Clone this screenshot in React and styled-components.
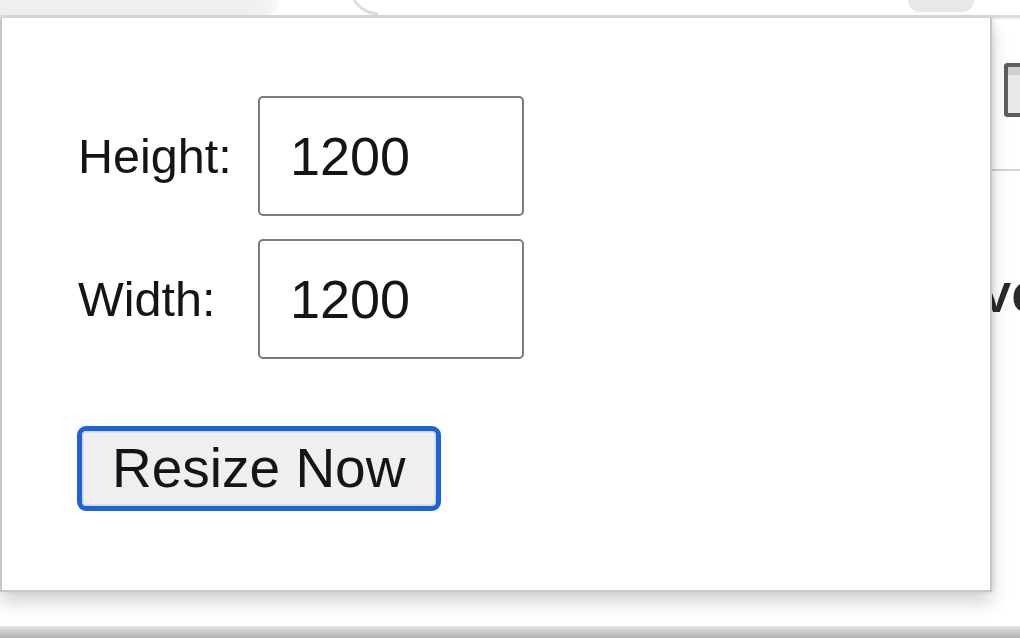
import React from "react";
import styled, { createGlobalStyle } from "styled-components";

const GlobalStyle = createGlobalStyle`
  html, body {
    margin: 0;
    padding: 0;
    background: #ffffff;
  }
  body {
    font-family: "Liberation Sans", Arial, Helvetica, sans-serif;
  }
`;

const Browser = styled.div`
  position: relative;
  width: 1020px;
  height: 638px;
  overflow: hidden;
  display: flex;
  flex-direction: column;
  background: #ffffff;
`;

const TabStrip = styled.div`
  height: 15px;
  display: flex;
  align-items: flex-start;
  background: #ffffff;
  border-bottom: 3px solid #dcdcdc;
  box-shadow: 0 1px 2px rgba(0, 0, 0, 0.08);
`;

const InactiveTabs = styled.div`
  width: 280px;
  height: 15px;
  background: linear-gradient(90deg, #eeeff1 0%, #eeeff1 88%, #f8f8f9 100%);
  border-bottom-right-radius: 18px;
`;

const TabEdge = styled.svg`
  margin-left: 72px;
  width: 40px;
  height: 15px;
`;

const Blob = styled.div`
  margin-left: auto;
  margin-right: 46px;
  width: 66px;
  height: 12px;
  background: #e8e8e8;
  border-radius: 0 0 33px 33px;
`;

const Viewport = styled.div`
  flex: 1;
  display: flex;
  justify-content: flex-end;
`;

const PageEdge = styled.div`
  width: 34px;
  display: flex;
  flex-direction: column;
  padding-top: 45px;
`;

const PageBox = styled.div`
  margin-left: 18px;
  height: 46px;
  border: 4px solid #5e5e5e;
  border-right: none;
  border-radius: 4px 0 0 4px;
  background: linear-gradient(#d0d0d0 0 8px, #e9e9e9 8px);
`;

const PageRule = styled.div`
  margin-top: 52px;
  height: 2px;
  background: #d4d4d4;
`;

const PageText = styled.div`
  margin-top: 92px;
  margin-left: -4px;
  font-family: "Open Sans", "Liberation Sans", sans-serif;
  font-weight: 600;
  font-size: 54px;
  line-height: 56px;
  color: #2a2a2a;
  white-space: nowrap;
`;

const BottomBar = styled.div`
  height: 12px;
  background: linear-gradient(#e4e4e4, #b2b2b2);
`;

const Popup = styled.div`
  position: absolute;
  left: 0;
  top: 18px;
  width: 992px;
  height: 574px;
  box-sizing: border-box;
  background: #ffffff;
  border: 2px solid #c6c6c6;
  border-top: none;
  box-shadow: 0 10px 18px rgba(0, 0, 0, 0.18), 2px 0 4px rgba(0, 0, 0, 0.08);
  padding: 78px 0 0 76px;
`;

const Form = styled.form`
  display: grid;
  grid-template-columns: 180px 266px;
  row-gap: 23px;
  align-items: center;
`;

const Label = styled.label`
  font-size: 48.5px;
  color: #151515;
  line-height: 1;
`;

const NumberField = styled.input`
  box-sizing: border-box;
  width: 266px;
  height: 120px;
  border: 2.5px solid #7a7a7a;
  border-radius: 5px;
  padding: 0 0 0 30px;
  font-family: "Liberation Sans", Arial, sans-serif;
  font-size: 54px;
  color: #151515;
  background: #fff;
  outline: none;
`;

const Actions = styled.div`
  grid-column: 1 / -1;
  margin-top: 44px;
  margin-left: -1px;
`;

const Button = styled.button`
  box-sizing: border-box;
  height: 85px;
  padding: 0 31px 0 30px;
  border: 5px solid #1b64d8;
  border-radius: 9px;
  background: #efefef;
  box-shadow: inset 0 0 0 1.5px #d6d6d6;
  font-family: "Liberation Sans", Arial, sans-serif;
  font-size: 55px;
  line-height: 1;
  color: #151515;
`;

const fields = [
  { id: "height", label: "Height:", value: "1200" },
  { id: "width", label: "Width:", value: "1200" },
];

export default function App() {
  return (
    <>
      <GlobalStyle />
      <Browser>
        <TabStrip>
          <InactiveTabs />
          <TabEdge viewBox="0 0 40 15">
            <path
              d="M2 0 C 8 8, 14 13, 26 14"
              fill="none"
              stroke="#dedede"
              strokeWidth="3"
            />
          </TabEdge>
          <Blob />
        </TabStrip>
        <Viewport>
          <PageEdge>
            <PageBox />
            <PageRule />
            <PageText>ve</PageText>
          </PageEdge>
        </Viewport>
        <BottomBar />
        <Popup>
          <Form onSubmit={(e) => e.preventDefault()}>
            {fields.map((f) => (
              <React.Fragment key={f.id}>
                <Label htmlFor={f.id}>{f.label}</Label>
                <NumberField id={f.id} type="text" defaultValue={f.value} />
              </React.Fragment>
            ))}
            <Actions>
              <Button type="submit">Resize Now</Button>
            </Actions>
          </Form>
        </Popup>
      </Browser>
    </>
  );
}
